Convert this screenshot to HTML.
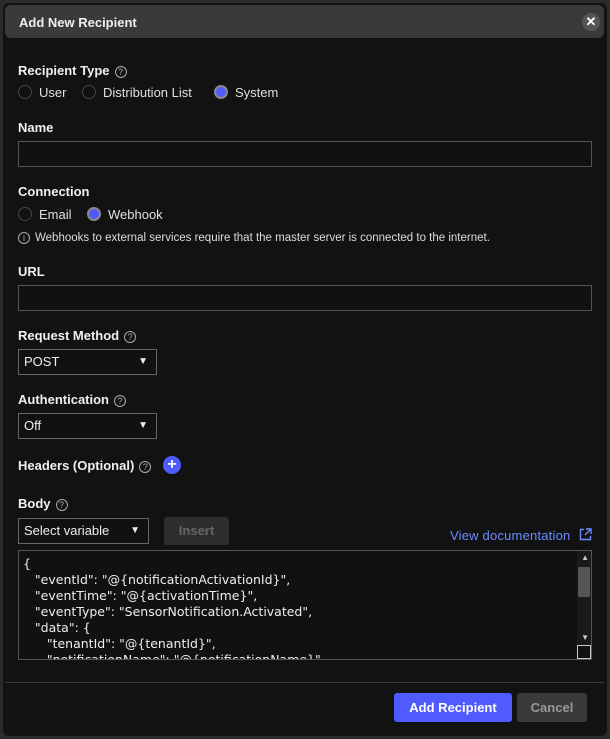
<!DOCTYPE html>
<html><head><style>
*{box-sizing:border-box;margin:0;padding:0}
body{width:610px;height:739px;background:#2b2b2b;font-family:"Liberation Sans",sans-serif;color:#e8e8e8;position:relative;overflow:hidden}
.dlg{position:absolute;left:3px;top:3px;width:604px;height:733px;background:#121212;border-radius:6px}
.hdr{position:absolute;left:5px;top:5px;width:599px;height:33px;background:#3a3a3a;border-radius:6px}
.a{position:absolute;white-space:nowrap}
.lbl{font-weight:bold;font-size:13px;color:#f0f0f0}
.t{font-size:13px;color:#e0e0e0}
.radio{position:absolute;width:14px;height:14px;border:1px solid #444;border-radius:50%;background:#111}
.radio.on{border:2px solid #888;background:#4f5bff}
.help{display:inline-block;width:12px;height:12px;border:1px solid #aaa;border-radius:50%;font-size:9px;text-align:center;line-height:10px;color:#aaa;font-weight:normal;vertical-align:0px;margin-left:5px}
.inp{position:absolute;border:1px solid #555;background:#111}
.sel{position:absolute;border:1px solid #666;background:#111;font-size:13px;padding:0 5px;line-height:24px;color:#eee}
.sel span{position:absolute;right:8px;top:0;font-size:10px}
.code{font-family:"DejaVu Sans","Liberation Sans",sans-serif;font-size:12.5px;line-height:16px;color:#eee}
</style></head><body>
<div class="dlg"></div>
<div class="hdr"></div>
<div class="a lbl" style="left:19px;top:15px">Add New Recipient</div>
<div class="a" style="left:582px;top:13px;width:18px;height:18px;border-radius:50%;background:#555;color:#fff;font-size:13px;text-align:center;line-height:18px;font-weight:bold">✕</div>

<div class="a lbl" style="left:18px;top:63px">Recipient Type<span class="help">?</span></div>
<div class="radio" style="left:18px;top:85px"></div><div class="a t" style="left:39px;top:85px">User</div>
<div class="radio" style="left:82px;top:85px"></div><div class="a t" style="left:103px;top:85px">Distribution List</div>
<div class="radio on" style="left:214px;top:85px"></div><div class="a t" style="left:235px;top:85px">System</div>

<div class="a lbl" style="left:18px;top:120px">Name</div>
<div class="inp" style="left:18px;top:141px;width:574px;height:26px"></div>

<div class="a lbl" style="left:18px;top:184px">Connection</div>
<div class="radio" style="left:18px;top:207px"></div><div class="a t" style="left:39px;top:207px">Email</div>
<div class="radio on" style="left:87px;top:207px"></div><div class="a t" style="left:108px;top:207px">Webhook</div>
<div class="a" style="left:18px;top:232px;font-size:11.5px;color:#ddd"><span class="help" style="margin:0 5px 0 0">i</span>Webhooks to external services require that the master server is connected to the internet.</div>

<div class="a lbl" style="left:18px;top:264px">URL</div>
<div class="inp" style="left:18px;top:285px;width:574px;height:26px"></div>

<div class="a lbl" style="left:18px;top:328px">Request Method<span class="help">?</span></div>
<div class="sel" style="left:18px;top:349px;width:139px;height:26px">POST<span>▼</span></div>

<div class="a lbl" style="left:18px;top:392px">Authentication<span class="help">?</span></div>
<div class="sel" style="left:18px;top:413px;width:139px;height:26px">Off<span>▼</span></div>

<div class="a lbl" style="left:18px;top:458px">Headers (Optional)<span class="help">?</span></div>
<div class="a" style="left:163px;top:456px;width:18px;height:18px;border-radius:50%;background:#4f5bff;color:#fff;font-weight:bold;font-size:16px;text-align:center;line-height:18px">+</div>

<div class="a lbl" style="left:18px;top:496px">Body<span class="help">?</span></div>
<div class="sel" style="left:18px;top:518px;width:131px;height:26px">Select variable<span>▼</span></div>
<div class="a" style="left:164px;top:517px;width:65px;height:28px;background:#2e2e2e;border-radius:3px;color:#666;font-size:13px;font-weight:bold;text-align:center;line-height:28px">Insert</div>
<div class="a" style="left:450px;top:528px;font-size:13px;color:#6b8cff;letter-spacing:0.2px">View documentation</div>
<svg class="a" style="left:579px;top:528px" width="13" height="13" viewBox="0 0 13 13" fill="none" stroke="#6b8cff" stroke-width="1.4"><path d="M5 1.5H1.5v10h10V8M7 1h5v5M12 1L6 7"/></svg>

<div class="inp" style="left:18px;top:550px;width:574px;height:110px;overflow:hidden;border-color:#555">
<div class="code" style="padding:5px 0 0 4px">{<br>&nbsp;&nbsp;&nbsp;"eventId": "@{notificationActivationId}",<br>&nbsp;&nbsp;&nbsp;"eventTime": "@{activationTime}",<br>&nbsp;&nbsp;&nbsp;"eventType": "SensorNotification.Activated",<br>&nbsp;&nbsp;&nbsp;"data": {<br>&nbsp;&nbsp;&nbsp;&nbsp;&nbsp;&nbsp;"tenantId": "@{tenantId}",<br>&nbsp;&nbsp;&nbsp;&nbsp;&nbsp;&nbsp;"notificationName": "@{notificationName}",</div>
<div class="a" style="right:0;top:0;width:14px;height:94px;background:#1a1a1a"></div>
<div class="a" style="right:1px;top:16px;width:12px;height:30px;background:#555"></div>
<div class="a" style="right:2px;top:2px;font-size:8px;color:#ccc">▲</div>
<div class="a" style="right:2px;top:82px;font-size:8px;color:#ccc">▼</div>
<div class="a" style="right:0;top:94px;width:14px;height:14px;border:1px solid #ccc;background:#111"></div>
</div>

<div class="a" style="left:5px;top:682px;width:599px;height:1px;background:#3a3a3a"></div>
<div class="a" style="left:394px;top:693px;width:118px;height:29px;background:#4f5bff;border-radius:3px;color:#fff;font-weight:bold;font-size:13px;text-align:center;line-height:29px">Add Recipient</div>
<div class="a" style="left:517px;top:693px;width:70px;height:29px;background:#3a3a3a;border-radius:3px;color:#999;font-weight:bold;font-size:13px;text-align:center;line-height:29px">Cancel</div>
</body></html>
